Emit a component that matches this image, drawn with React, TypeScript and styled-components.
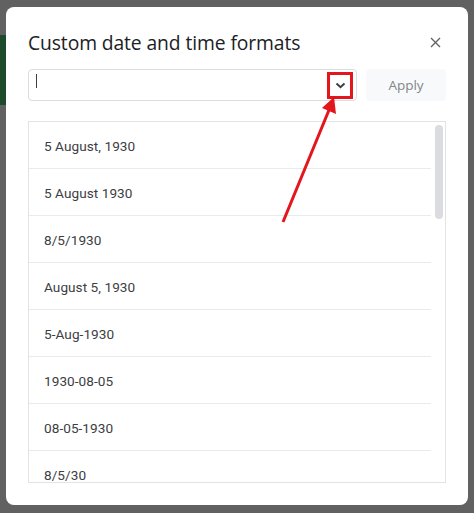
import React from "react";
import styled, { createGlobalStyle } from "styled-components";

const GlobalStyle = createGlobalStyle`
  html, body {
    margin: 0;
    padding: 0;
    background: #616161;
  }
  * {
    box-sizing: border-box;
  }
`;

const Backdrop = styled.div`
  position: relative;
  width: 474px;
  height: 513px;
  background: #616161;
  padding: 7px 6px 8px 6px;
  overflow: hidden;
`;

// faint sheet content behind the overlay
const SheetStrip = styled.div`
  position: absolute;
  left: 0;
  top: 35px;
  width: 6px;
  height: 70px;
  background: #1c4a2a;
`;

const Dialog = styled.div`
  position: relative;
  height: 498px;
  background: #ffffff;
  border-radius: 8px;
  padding: 22px 22px 22px 22px;
  display: flex;
  flex-direction: column;
  font-family: Roboto, "Liberation Sans", sans-serif;
`;

const Header = styled.div`
  display: flex;
  align-items: center;
  justify-content: space-between;
  height: 26px;
  margin-bottom: 14px;
`;

const Title = styled.h1`
  margin: 0;
  font-family: "Open Sans", Roboto, sans-serif;
  font-size: 19.3px;
  font-weight: 400;
  color: #202124;
  letter-spacing: -0.1px;
`;

const CloseButton = styled.button`
  border: none;
  background: none;
  padding: 0;
  margin-right: 4px;
  width: 14px;
  height: 14px;
  display: flex;
  align-items: center;
  justify-content: center;
  cursor: pointer;
`;

const InputRow = styled.div`
  display: flex;
  gap: 9px;
  height: 32px;
  margin-bottom: 20px;
`;

const InputBox = styled.div`
  position: relative;
  flex: 0 0 329px;
  border: 1px solid #dadce0;
  border-radius: 4px;
  display: flex;
  align-items: center;
  justify-content: space-between;
  padding: 0 3px 0 7px;
`;

const Caret = styled.div`
  width: 1px;
  height: 14px;
  background: #3c4043;
  align-self: flex-start;
  margin-top: 4px;
`;

const DropBox = styled.div`
  width: 26px;
  height: 27px;
  border: 3px solid #e3151d;
  display: flex;
  align-items: center;
  justify-content: center;
`;

const ApplyButton = styled.button`
  flex: 0 0 80px;
  border: none;
  border-radius: 4px;
  background: #f8f9fa;
  color: #80868b;
  font-family: "Open Sans", Roboto, sans-serif;
  font-size: 13.5px;
  padding: 0;
`;

const List = styled.div`
  height: 362px;
  border: 1px solid #e3e3e3;
  display: flex;
  overflow: hidden;
`;

const Rows = styled.div`
  flex: 0 0 402px;
  display: flex;
  flex-direction: column;
`;

const Row = styled.div`
  flex: 0 0 47px;
  display: flex;
  align-items: center;
  padding-left: 15px;
  padding-top: 1px;
  border-bottom: 1px solid #e8eaed;
  color: #3c4043;
  font-size: 13.6px;
  letter-spacing: 0.05px;
`;

const Track = styled.div`
  flex: 1;
  padding: 3px 2px 0 4px;
`;

const Thumb = styled.div`
  width: 8px;
  height: 94px;
  border-radius: 4px;
  background: #dadce0;
`;

const ArrowLayer = styled.svg`
  position: absolute;
  left: 0;
  top: 0;
  pointer-events: none;
`;

const formats = [
  "5 August, 1930",
  "5 August 1930",
  "8/5/1930",
  "August 5, 1930",
  "5-Aug-1930",
  "1930-08-05",
  "08-05-1930",
  "8/5/30",
];

export default function App() {
  return (
    <>
      <GlobalStyle />
      <Backdrop>
        <SheetStrip />
        <Dialog>
          <Header>
            <Title>Custom date and time formats</Title>
            <CloseButton aria-label="Close">
              <svg width="11" height="11" viewBox="0 0 11 11">
                <path d="M1 1 L10 10 M10 1 L1 10" stroke="#5f6368" strokeWidth="1.4" />
              </svg>
            </CloseButton>
          </Header>
          <InputRow>
            <InputBox>
              <Caret />
              <DropBox>
                <svg width="11" height="7" viewBox="0 0 11 7">
                  <path d="M1.5 1.5 L5.5 5.2 L9.5 1.5" stroke="#3c4043" strokeWidth="2" fill="none" />
                </svg>
              </DropBox>
            </InputBox>
            <ApplyButton>Apply</ApplyButton>
          </InputRow>
          <List>
            <Rows>
              {formats.map((f) => (
                <Row key={f}>{f}</Row>
              ))}
            </Rows>
            <Track>
              <Thumb />
            </Track>
          </List>
        </Dialog>
        <ArrowLayer width="474" height="513" viewBox="0 0 474 513">
          <line x1="283" y1="222" x2="329" y2="110" stroke="#e3151d" strokeWidth="3" />
          <polygon points="334,97 336,114 322,108" fill="#e3151d" />
        </ArrowLayer>
      </Backdrop>
    </>
  );
}
